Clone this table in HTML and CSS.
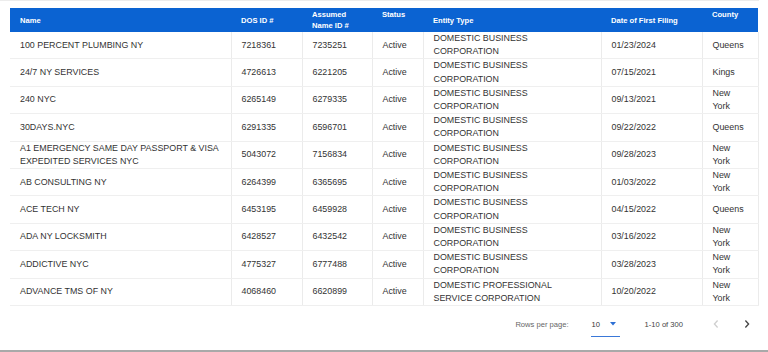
FILE: index.html
```html
<!DOCTYPE html>
<html>
<head>
<meta charset="utf-8">
<link rel="stylesheet" href="styles.css">
</head>
<body>
<div class="card">
  <table class="grid">
    <colgroup>
      <col class="c-name"><col class="c-dos"><col class="c-ass"><col class="c-status"><col class="c-entity"><col class="c-date"><col class="c-county">
    </colgroup>
    <thead>
      <tr>
        <th class="name">Name</th>
        <th>DOS ID #</th>
        <th>Assumed Name ID #</th>
        <th class="top">Status</th>
        <th>Entity Type</th>
        <th>Date of First Filing</th>
        <th class="top">County</th>
      </tr>
    </thead>
    <tbody>
      <tr><td class="name">100 PERCENT PLUMBING NY</td><td>7218361</td><td>7235251</td><td>Active</td><td>DOMESTIC BUSINESS CORPORATION</td><td>01/23/2024</td><td>Queens</td></tr>
      <tr><td class="name">24/7 NY SERVICES</td><td>4726613</td><td>6221205</td><td>Active</td><td>DOMESTIC BUSINESS CORPORATION</td><td>07/15/2021</td><td>Kings</td></tr>
      <tr><td class="name">240 NYC</td><td>6265149</td><td>6279335</td><td>Active</td><td>DOMESTIC BUSINESS CORPORATION</td><td>09/13/2021</td><td>New York</td></tr>
      <tr><td class="name">30DAYS.NYC</td><td>6291335</td><td>6596701</td><td>Active</td><td>DOMESTIC BUSINESS CORPORATION</td><td>09/22/2022</td><td>Queens</td></tr>
      <tr><td class="name">A1 EMERGENCY SAME DAY PASSPORT &amp; VISA EXPEDITED SERVICES NYC</td><td>5043072</td><td>7156834</td><td>Active</td><td>DOMESTIC BUSINESS CORPORATION</td><td>09/28/2023</td><td>New York</td></tr>
      <tr><td class="name">AB CONSULTING NY</td><td>6264399</td><td>6365695</td><td>Active</td><td>DOMESTIC BUSINESS CORPORATION</td><td>01/03/2022</td><td>New York</td></tr>
      <tr><td class="name">ACE TECH NY</td><td>6453195</td><td>6459928</td><td>Active</td><td>DOMESTIC BUSINESS CORPORATION</td><td>04/15/2022</td><td>Queens</td></tr>
      <tr><td class="name">ADA NY LOCKSMITH</td><td>6428527</td><td>6432542</td><td>Active</td><td>DOMESTIC BUSINESS CORPORATION</td><td>03/16/2022</td><td>New York</td></tr>
      <tr><td class="name">ADDICTIVE NYC</td><td>4775327</td><td>6777488</td><td>Active</td><td>DOMESTIC BUSINESS CORPORATION</td><td>03/28/2023</td><td>New York</td></tr>
      <tr><td class="name">ADVANCE TMS OF NY</td><td>4068460</td><td>6620899</td><td>Active</td><td>DOMESTIC PROFESSIONAL SERVICE CORPORATION</td><td>10/20/2022</td><td>New York</td></tr>
    </tbody>
  </table>
  <div class="pager">
    <span class="rows-label">Rows per page:</span>
    <span class="select">
      <span class="select-value">10</span>
      <svg class="caret" width="6" height="4" viewBox="0 0 6 4"><polygon points="0,0 6,0 3,3.5" fill="#2d6fd4"/></svg>
    </span>
    <span class="range">1-10 of 300</span>
    <span class="nav">
      <button class="nav-btn disabled" type="button"><svg width="6" height="10" viewBox="0 0 6 10"><polyline points="4.6,1.5 1.4,5 4.6,8.5" fill="none" stroke="#cfcfcf" stroke-width="1.3"/></svg></button>
      <button class="nav-btn" type="button"><svg width="6" height="10" viewBox="0 0 6 10"><polyline points="1.4,1.5 4.6,5 1.4,8.5" fill="none" stroke="#444" stroke-width="1.3"/></svg></button>
    </span>
  </div>
</div>
<div class="bottom-edge"></div>
</body>
</html>
```

FILE: styles.css
```css
html, body {
  margin: 0;
  padding: 0;
  background: #fff;
}
body {
  font-family: "Liberation Sans", Arial, sans-serif;
  color: #333;
  width: 768px;
  height: 352px;
  overflow: hidden;
  display: flex;
  flex-direction: column;
}
.card {
  width: 759px;
  box-sizing: border-box;
  border-top: 1px solid #ececec;
  padding: 7px 0 0 10px;
  flex: 1;
}
.grid {
  width: 748px;
  table-layout: fixed;
  border-collapse: collapse;
  border-spacing: 0;
}
.c-name { width: 221px; }
.c-dos { width: 71px; }
.c-ass { width: 70px; }
.c-status { width: 51px; }
.c-entity { width: 178px; }
.c-date { width: 101px; }
.c-county { width: 56px; }

.grid th {
  background: #0b63d2;
  color: #fff;
  font-size: 7.6px;
  font-weight: bold;
  line-height: 11px;
  text-align: left;
  padding: 1px 10px;
  height: 22px;
  vertical-align: middle;
}
.grid th.top {
  vertical-align: top;
}
.grid td {
  font-size: 8.9px;
  line-height: 13.2px;
  color: #333;
  padding: 0 10px;
  height: 26.4px;
  vertical-align: middle;
  border-right: 1px solid #ebebeb;
  border-bottom: 1px solid #efefef;
}
.grid td.name {
  padding-right: 5px;
}
.pager {
  display: flex;
  align-items: center;
  justify-content: flex-end;
  height: 36px;
  padding-right: 0;
  font-size: 7.6px;
}
.rows-label {
  color: #666;
}
.select {
  display: flex;
  align-items: center;
  margin-left: 22px;
  width: 29px;
  height: 17px;
  box-sizing: border-box;
  border-bottom: 1px solid #3a78d8;
  margin-top: 9px;
  padding-bottom: 8px;
  padding-left: 1px;
}
.select-value {
  color: #333;
  font-size: 7.6px;
}
.caret {
  margin-left: 10px;
}
.range {
  color: #444;
  margin-left: 25px;
}
.nav {
  display: flex;
  gap: 7px;
  margin-left: 21px;
}
.nav-btn {
  width: 24px;
  height: 24px;
  border: 0;
  padding: 0;
  background: transparent;
  display: flex;
  align-items: center;
  justify-content: center;
}
.bottom-edge {
  height: 2px;
  background: #a9a9a9;
}
```
